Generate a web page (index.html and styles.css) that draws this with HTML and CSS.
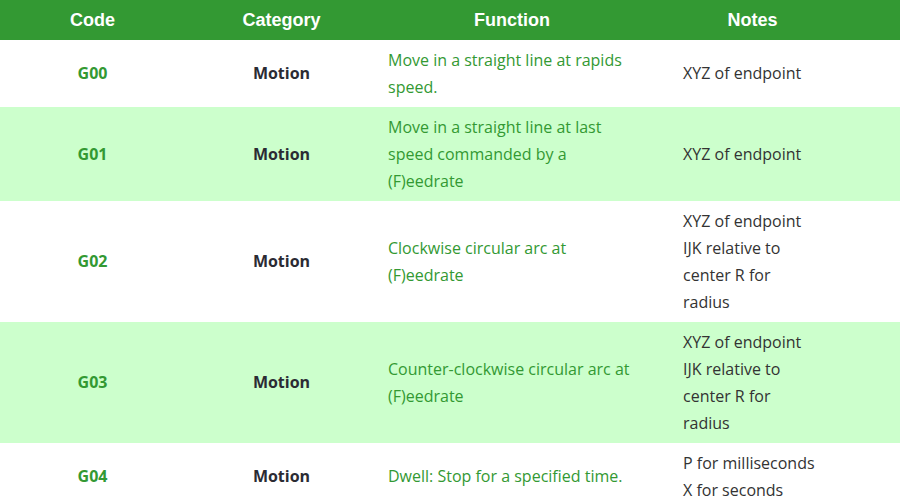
FILE: index.html
```html
<!DOCTYPE html>
<html lang="en">
<head>
<meta charset="utf-8">
<title>G-code table</title>
<link rel="stylesheet" href="styles.css">
</head>
<body>
<table class="gtable">
  <colgroup>
    <col class="c-code">
    <col class="c-cat">
    <col class="c-func">
    <col class="c-notes">
  </colgroup>
  <thead>
    <tr>
      <th>Code</th>
      <th>Category</th>
      <th class="th-func">Function</th>
      <th class="th-notes">Notes</th>
    </tr>
  </thead>
  <tbody>
    <tr>
      <td class="code">G00</td>
      <td class="cat">Motion</td>
      <td class="func">Move in a straight line at rapids speed.</td>
      <td class="notes">XYZ of endpoint</td>
    </tr>
    <tr class="alt">
      <td class="code">G01</td>
      <td class="cat">Motion</td>
      <td class="func">Move in a straight line at last speed commanded by a (F)eedrate</td>
      <td class="notes">XYZ of endpoint</td>
    </tr>
    <tr>
      <td class="code">G02</td>
      <td class="cat">Motion</td>
      <td class="func">Clockwise circular arc at (F)eedrate</td>
      <td class="notes">XYZ of endpoint<br>IJK relative to center R for radius</td>
    </tr>
    <tr class="alt">
      <td class="code">G03</td>
      <td class="cat">Motion</td>
      <td class="func">Counter-clockwise circular arc at (F)eedrate</td>
      <td class="notes">XYZ of endpoint<br>IJK relative to center R for radius</td>
    </tr>
    <tr>
      <td class="code">G04</td>
      <td class="cat">Motion</td>
      <td class="func">Dwell: Stop for a specified time.</td>
      <td class="notes">P for milliseconds<br>X for seconds</td>
    </tr>
  </tbody>
</table>
</body>
</html>
```

FILE: styles.css
```css
html, body {
  margin: 0;
  padding: 0;
  background: #ffffff;
}

.gtable {
  width: 900px;
  border-collapse: collapse;
  border-spacing: 0;
  table-layout: fixed;
  font-family: "Open Sans", "Liberation Sans", sans-serif;
  font-size: 16px;
  line-height: 27px;
}

.c-code { width: 185px; }
.c-cat { width: 193px; }
.c-func { width: 268px; }
.c-notes { width: 254px; }

.gtable th {
  background: #339933;
  color: #ffffff;
  font-family: "Liberation Sans", Arial, sans-serif;
  font-weight: bold;
  font-size: 18px;
  line-height: 24px;
  height: 40px;
  padding: 0 10px;
  text-align: center;
  vertical-align: middle;
  box-sizing: border-box;
}

.gtable th.th-notes {
  padding: 0 78px 0 37px;
}

.gtable td {
  padding: 6.5px 10px;
  vertical-align: middle;
}

.gtable tr.alt td {
  background: #ccffcc;
}

.code {
  text-align: center;
  font-weight: bold;
  color: #339933;
}

.cat {
  text-align: center;
  font-weight: bold;
  color: #2b2b33;
}

.func {
  text-align: left;
  color: #339933;
}

.gtable td.notes {
  text-align: left;
  color: #333333;
  padding-left: 37px;
  padding-right: 82px;
}
```
